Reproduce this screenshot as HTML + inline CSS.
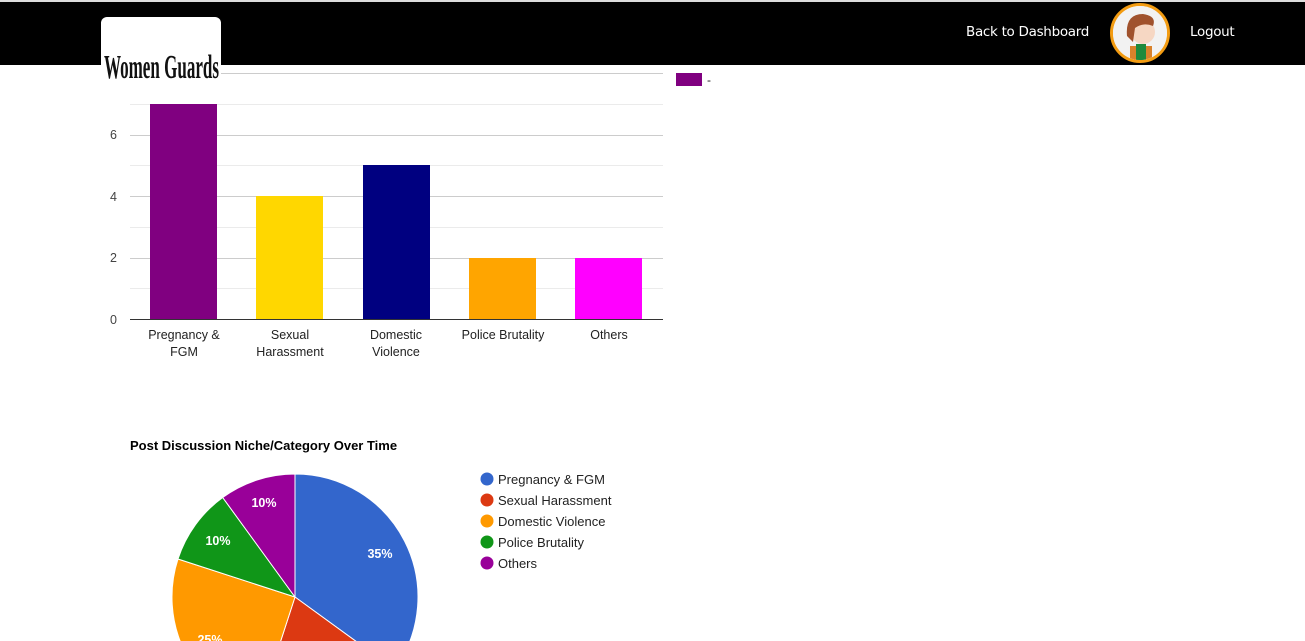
<!DOCTYPE html>
<html><head><meta charset="utf-8"><style>
html,body{margin:0;width:1305px;height:641px;overflow:hidden}
body{background:#fff;font-family:"Liberation Sans",Arial,sans-serif;position:relative}
.nav{position:absolute;top:2px;left:0;width:1305px;height:63px;background:#000}
.top{position:absolute;top:0;left:0;width:1305px;height:2px;background:#ddd}
.logo{position:absolute;left:101px;top:17px;width:120px;height:70px;background:#fff;border-radius:6px 6px 0 0}
.nl{position:absolute;color:#fff;font-family:"DejaVu Sans",sans-serif;font-size:13.5px;top:24px;letter-spacing:-.3px}
.av{position:absolute;left:1110px;top:3px;width:54px;height:54px;border-radius:50%;border:3px solid #f39c12;background:#eee;overflow:hidden}
</style></head><body>
<div class="top"></div><div class="nav"></div>
<div class="nl" style="left:966px">Back to Dashboard</div>
<div class="av"><svg width="54" height="54"><rect width="54" height="54" fill="#f2f2f2"/><rect x="17" y="40" width="22" height="16" fill="#d9822b"/><rect x="23" y="38" width="10" height="18" fill="#1e8a3c"/><circle cx="30" cy="26" r="12" fill="#f6d7c3"/><path d="M14 30 Q12 8 30 8 Q44 10 40 20 Q30 16 22 22 L20 36 Z" fill="#a0522d"/></svg></div>
<div class="nl" style="left:1190px">Logout</div>
<svg style="position:absolute;left:0;top:0;font-family:'Liberation Sans',Arial,sans-serif" width="1305" height="641">
<g stroke="#ccc" stroke-width="1">
<line x1="130" x2="663" y1="73.5" y2="73.5"/><line x1="130" x2="663" y1="135.5" y2="135.5"/><line x1="130" x2="663" y1="196.5" y2="196.5"/><line x1="130" x2="663" y1="258.5" y2="258.5"/>
</g>
<g stroke="#ebebeb"><line x1="130" x2="663" y1="104.5" y2="104.5"/><line x1="130" x2="663" y1="165.5" y2="165.5"/><line x1="130" x2="663" y1="227.5" y2="227.5"/><line x1="130" x2="663" y1="288.5" y2="288.5"/></g>
<rect x="150" y="104" width="67" height="215" fill="#800080"/>
<rect x="256" y="196" width="67" height="123" fill="#ffd700"/>
<rect x="363" y="165" width="67" height="154" fill="#000080"/>
<rect x="469" y="258" width="67" height="61" fill="#ffa500"/>
<rect x="575" y="258" width="67" height="61" fill="#ff00ff"/>
<line x1="130" x2="663" y1="319.5" y2="319.5" stroke="#333"/>
<g font-size="12.5" fill="#444" text-anchor="end"><text x="117" y="139">6</text><text x="117" y="201">4</text><text x="117" y="262">2</text><text x="117" y="324">0</text></g>
<g font-size="12.5" fill="#222" text-anchor="middle">
<text x="184" y="339">Pregnancy &amp;</text><text x="184" y="356">FGM</text>
<text x="290" y="339">Sexual</text><text x="290" y="356">Harassment</text>
<text x="396" y="339">Domestic</text><text x="396" y="356">Violence</text>
<text x="503" y="339">Police Brutality</text>
<text x="609" y="339">Others</text></g>
<rect x="676" y="73" width="26" height="13" fill="#800080"/><text x="707" y="84" font-size="12" fill="#222">-</text>
<text x="130" y="450" font-size="13" font-weight="bold" fill="#000">Post Discussion Niche/Category Over Time</text>
<g stroke="#fff" stroke-width="1">
<path d="M295 597 L295 474 A123 123 0 0 1 394.5 669.3Z" fill="#3366cc"/>
<path d="M295 597 L394.5 669.3 A123 123 0 0 1 257 714Z" fill="#dc3912"/>
<path d="M295 597 L257 714 A123 123 0 0 1 178 559Z" fill="#ff9900"/>
<path d="M295 597 L178 559 A123 123 0 0 1 222.7 497.5Z" fill="#109618"/>
<path d="M295 597 L222.7 497.5 A123 123 0 0 1 295 474Z" fill="#990099"/>
</g>
<g font-size="12.5" font-weight="bold" fill="#fff" text-anchor="middle"><text x="380" y="558">35%</text><text x="218" y="545">10%</text><text x="264" y="507">10%</text><text x="210" y="644">25%</text></g>
<g font-size="13" fill="#222">
<circle cx="487" cy="479" r="6.5" fill="#3366cc"/><text x="498" y="484">Pregnancy &amp; FGM</text>
<circle cx="487" cy="500" r="6.5" fill="#dc3912"/><text x="498" y="505">Sexual Harassment</text>
<circle cx="487" cy="521" r="6.5" fill="#ff9900"/><text x="498" y="526">Domestic Violence</text>
<circle cx="487" cy="542" r="6.5" fill="#109618"/><text x="498" y="547">Police Brutality</text>
<circle cx="487" cy="563" r="6.5" fill="#990099"/><text x="498" y="568">Others</text>
</g>
</svg>
<div class="logo"></div>
<svg style="position:absolute;left:101px;top:17px" width="122" height="75"><text x="3" y="61" font-family="'Liberation Serif',serif" font-weight="bold" font-size="34" textLength="115" lengthAdjust="spacingAndGlyphs" fill="#111">Women Guards</text></svg>
</body></html>
